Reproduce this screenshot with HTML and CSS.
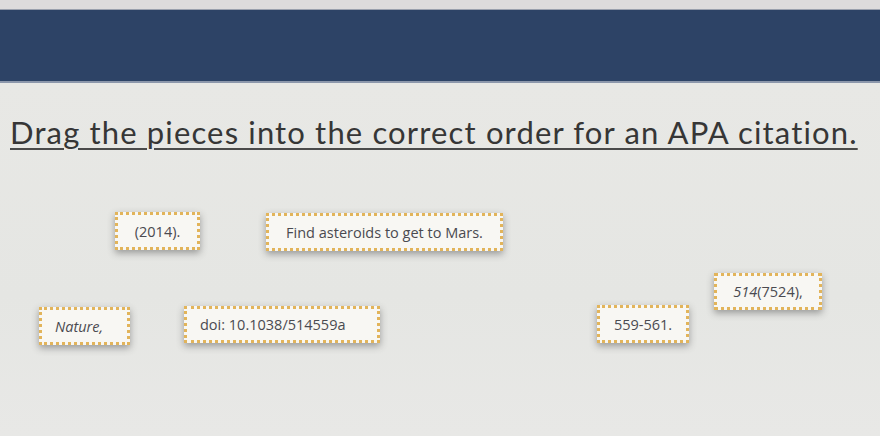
FILE: index.html
```html
<!DOCTYPE html>
<html>
<head>
<meta charset="utf-8">
<link rel="stylesheet" href="styles.css">
</head>
<body>
<div class="page">
  <div class="topstrip"></div>
  <div class="banner"></div>
  <div class="content">
    <h1 class="title">Drag the pieces into the correct order for an APA citation.</h1>
    <div class="canvas">
      <div class="piece p-year">(2014).</div>
      <div class="piece p-title">Find asteroids to get to Mars.</div>
      <div class="piece p-journal"><i>Nature,</i></div>
      <div class="piece p-doi">doi: 10.1038/514559a</div>
      <div class="piece p-pages">559-561.</div>
      <div class="piece p-vol"><i>514</i>(7524),</div>
    </div>
  </div>
</div>
</body>
</html>
```
FILE: styles.css
```css
html, body {
  margin: 0;
  padding: 0;
}
body {
  width: 880px;
  height: 436px;
  overflow: hidden;
  background: #e7e7e4;
  font-family: "Open Sans", "Liberation Sans", sans-serif;
}
.page {
  display: flex;
  flex-direction: column;
  height: 436px;
}
.topstrip {
  height: 9px;
  background: #dddbdc;
  border-bottom: 1px solid #9aa0ad;
}
.banner {
  height: 71px;
  background: #2d4366;
  border-bottom: 2px solid #8c97ab;
}
.content {
  flex: 1;
  position: relative;
  background: linear-gradient(180deg, #e8e8e5 0%, #e5e6e3 60%, #e8e8e6 100%);
}
.title {
  margin: 31px 0 0 10px;
  font-family: Lato, "Open Sans", sans-serif;
  font-weight: 400;
  font-size: 31px;
  letter-spacing: 1.15px;
  line-height: 36px;
  color: #363636;
  text-decoration: underline;
  text-decoration-thickness: 2px;
  text-underline-offset: 4px;
  text-decoration-color: #4a4a4a;
  white-space: nowrap;
}
.canvas {
  position: absolute;
  inset: 0;
}
.piece {
  position: absolute;
  box-sizing: border-box;
  display: flex;
  align-items: center;
  justify-content: center;
  background: #f8f7f3;
  border: 3px dotted #e2b45a;
  box-shadow: 0 3px 7px rgba(60, 60, 60, 0.45);
  color: #4a4a50;
  font-size: 14.5px;
  white-space: nowrap;
}
.p-year { left: 115px; top: 129px; width: 85px; height: 38px; }
.p-title { left: 266px; top: 130px; width: 237px; height: 38px; }
.p-journal { left: 39px; top: 224px; width: 91px; height: 38px; justify-content: flex-start; padding-left: 13px; }
.p-doi { left: 184px; top: 223px; width: 196px; height: 37px; justify-content: flex-start; padding-left: 13px; }
.p-pages { left: 597px; top: 222px; width: 92px; height: 38px; }
.p-vol { left: 714px; top: 190px; width: 108px; height: 37px; }
```
